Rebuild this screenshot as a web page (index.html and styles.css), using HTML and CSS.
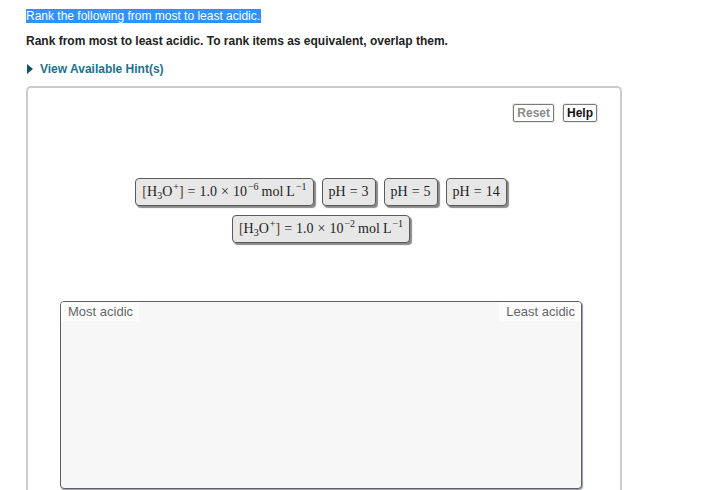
FILE: index.html
```html
<!DOCTYPE html>
<html>
<head>
<meta charset="utf-8">
<link rel="stylesheet" href="styles.css">
</head>
<body>
<div class="page">
  <div class="title"><span class="sel">Rank the following from most to least acidic.</span></div>
  <div class="instr">Rank from most to least acidic. To rank items as equivalent, overlap them.</div>
  <div class="hint"><span class="tri"></span><span class="hint-text">View Available Hint(s)</span></div>
  <div class="box">
    <div class="toolbar">
      <button class="btn reset">Reset</button>
      <button class="btn help">Help</button>
    </div>
    <div class="tiles">
      <div class="row">
        <div class="tile"><span class="m"><span class="br">[</span>H<sub>3</sub>O<sup>+</sup><span class="br">]</span><span class="op">=</span>1.0<span class="op">×</span>10<sup>−6</sup><span class="u">mol</span><span class="u">L</span><sup>−1</sup></span></div>
        <div class="tile"><span class="m">pH<span class="op">=</span>3</span></div>
        <div class="tile"><span class="m">pH<span class="op">=</span>5</span></div>
        <div class="tile"><span class="m">pH<span class="op">=</span>14</span></div>
      </div>
      <div class="row">
        <div class="tile"><span class="m"><span class="br">[</span>H<sub>3</sub>O<sup>+</sup><span class="br">]</span><span class="op">=</span>1.0<span class="op">×</span>10<sup>−2</sup><span class="u">mol</span><span class="u">L</span><sup>−1</sup></span></div>
      </div>
    </div>
    <div class="drop">
      <div class="labels">
        <span class="lab">Most acidic</span>
        <span class="lab">Least acidic</span>
      </div>
    </div>
  </div>
</div>
</body>
</html>
```
FILE: styles.css
```css
html, body {
  margin: 0;
  padding: 0;
  background: #fff;
}
body {
  font-family: "Liberation Sans", Arial, sans-serif;
  font-size: 12px;
  color: #222;
}
.page {
  padding: 9px 0 0 26px;
  height: 481px;
  overflow: hidden;
}
.title {
  line-height: 15px;
  height: 15px;
}
.sel {
  background: #3390ff;
  color: #fff;
  padding: 0 1px 0 0;
}
.instr {
  margin-top: 10px;
  line-height: 15px;
  font-weight: bold;
  color: #222;
}
.hint {
  margin-top: 12px;
  display: flex;
  align-items: center;
  height: 15px;
}
.tri {
  width: 0;
  height: 0;
  border-top: 5px solid transparent;
  border-bottom: 5px solid transparent;
  border-left: 6px solid #124f6a;
  margin-left: 1px;
  margin-right: 7px;
}
.hint-text {
  font-weight: bold;
  color: #1a7293;
}
.box {
  margin-top: 10px;
  height: 420px;
  border: 2px solid #cccccc;
  border-bottom: none;
  border-radius: 5px 5px 0 0;
  padding: 16px 38px 0 32px;
  box-sizing: border-box;
  width: 596px;
}
.toolbar {
  display: flex;
  justify-content: flex-end;
  gap: 9px;
  margin-right: -15px;
}
.btn {
  font-family: "Liberation Sans", Arial, sans-serif;
  font-size: 12px;
  font-weight: bold;
  background: #fff;
  border: 1px solid #7a7a7a;
  border-radius: 2px;
  padding: 0 3px;
  height: 18px;
  line-height: 16px;
  box-shadow: 0 0 0 1px #e8e8e8;
}
.reset { color: #8a8a8a; }
.help { color: #111; }
.tiles {
  margin-top: 56px;
  display: flex;
  flex-direction: column;
  gap: 9px;
  align-items: center;
}
.row {
  display: flex;
  gap: 8px;
  justify-content: center;
}
.tile {
  font-family: "Liberation Serif", "DejaVu Serif", serif;
  font-size: 14px;
  color: #1e1e1e;
  background: #e7e7e7;
  border: 1px solid #5a5a5a;
  border-radius: 4px;
  box-shadow: 2px 2px 1px #8a8a8a;
  height: 28px;
  box-sizing: border-box;
  padding: 0 6px;
  display: flex;
  align-items: center;
  white-space: nowrap;
}
.m {
  display: inline-block;
  line-height: 16px;
}
.m sub, .m sup {
  font-size: 10px;
  line-height: 0;
  position: relative;
  vertical-align: baseline;
}
.m sub { top: 3px; }
.m sup { top: -6px; margin-left: 1px; }
.br { color: #5a3a20; }
.op { margin: 0 4px; }
.u { margin-left: 3px; }
.drop {
  margin-top: 58px;
  height: 186px;
  background: #f7f7f7;
  border: 1px solid #5e5e66;
  border-radius: 4px;
  box-shadow: 1px 1px 1px #9a9aa6;
}
.labels {
  display: flex;
  justify-content: space-between;
  padding: 0;
}
.lab {
  background: #fcfcfc;
  color: #666;
  font-size: 13px;
  line-height: 19px;
  padding: 0 6px 0 7px;
  border-radius: 3px 0 0 0;
}
.lab + .lab { border-radius: 0 3px 0 0; }
```
